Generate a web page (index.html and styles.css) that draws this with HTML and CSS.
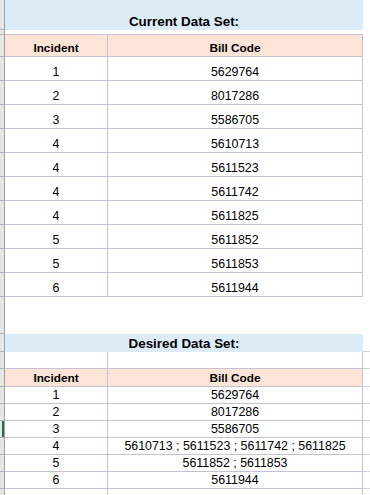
FILE: index.html
```html
<!DOCTYPE html>
<html>
<head>
<meta charset="utf-8">
<link rel="stylesheet" href="styles.css">
</head>
<body>
<div class="sheet">
  <div class="row h30"><div class="gut"></div><div class="title">Current Data Set:</div><div class="c3"></div></div>
  <div class="row h5"><div class="gut"></div><div class="gapcell"></div><div class="c3"></div></div>
  <div class="row h22 hdr"><div class="gut"></div><div class="cell c1">Incident</div><div class="cell c2">Bill Code</div><div class="c3"></div></div>
  <div class="row h24"><div class="gut"></div><div class="cell c1">1</div><div class="cell c2">5629764</div><div class="c3"></div></div>
  <div class="row h24"><div class="gut"></div><div class="cell c1">2</div><div class="cell c2">8017286</div><div class="c3"></div></div>
  <div class="row h24"><div class="gut"></div><div class="cell c1">3</div><div class="cell c2">5586705</div><div class="c3"></div></div>
  <div class="row h24"><div class="gut"></div><div class="cell c1">4</div><div class="cell c2">5610713</div><div class="c3"></div></div>
  <div class="row h24"><div class="gut"></div><div class="cell c1">4</div><div class="cell c2">5611523</div><div class="c3"></div></div>
  <div class="row h24"><div class="gut"></div><div class="cell c1">4</div><div class="cell c2">5611742</div><div class="c3"></div></div>
  <div class="row h24"><div class="gut"></div><div class="cell c1">4</div><div class="cell c2">5611825</div><div class="c3"></div></div>
  <div class="row h24"><div class="gut"></div><div class="cell c1">5</div><div class="cell c2">5611852</div><div class="c3"></div></div>
  <div class="row h24"><div class="gut"></div><div class="cell c1">5</div><div class="cell c2">5611853</div><div class="c3"></div></div>
  <div class="row h24"><div class="gut"></div><div class="cell c1">6</div><div class="cell c2">5611944</div><div class="c3"></div></div>
  <div class="row h37"><div class="gut"></div></div>
  <div class="row h18"><div class="gut"></div><div class="title">Desired Data Set:</div><div class="c3 grid"></div></div>
  <div class="row h17"><div class="gut"></div><div class="cell c1"></div><div class="cell c2"></div><div class="c3 grid"></div></div>
  <div class="row h18 hdr"><div class="gut"></div><div class="cell c1">Incident</div><div class="cell c2">Bill Code</div><div class="c3 grid"></div></div>
  <div class="row h17"><div class="gut"></div><div class="cell c1">1</div><div class="cell c2">5629764</div><div class="c3 grid"></div></div>
  <div class="row h17"><div class="gut"></div><div class="cell c1">2</div><div class="cell c2">8017286</div><div class="c3 grid"></div></div>
  <div class="row h17"><div class="gut sel"></div><div class="cell c1">3</div><div class="cell c2">5586705</div><div class="c3 grid"></div></div>
  <div class="row h17"><div class="gut"></div><div class="cell c1">4</div><div class="cell c2">5610713 ; 5611523 ; 5611742 ; 5611825</div><div class="c3 grid"></div></div>
  <div class="row h17"><div class="gut"></div><div class="cell c1">5</div><div class="cell c2">5611852 ; 5611853</div><div class="c3 grid"></div></div>
  <div class="row h17"><div class="gut"></div><div class="cell c1">6</div><div class="cell c2">5611944</div><div class="c3 grid"></div></div>
  <div class="row h17"><div class="gut"></div><div class="cell c1"></div><div class="cell c2"></div><div class="c3 grid"></div></div>
</div>
</body>
</html>
```
FILE: styles.css
```css
html, body {
  margin: 0;
  padding: 0;
  background: #ffffff;
}
body {
  width: 370px;
  height: 495px;
  overflow: hidden;
  font-family: "Liberation Sans", Arial, sans-serif;
  font-size: 12.4px;
  color: #000;
}
.sheet {
  display: flex;
  flex-direction: column;
}
.row {
  display: flex;
  flex: none;
}
.h30 { height: 30px; }
.h5 { height: 5px; }
.h22 { height: 22px; }
.h24 { height: 24px; }
.h37 { height: 37px; }
.h18 { height: 18px; }
.h17 { height: 17px; }

.gut {
  width: 5px;
  flex: none;
  box-sizing: border-box;
  background: #e6e6e6;
  border-right: 1px solid #a0a0a0;
  border-bottom: 1px solid #b4b4b4;
}
.gut.sel {
  box-shadow: inset -2px 0 0 #217346;
}
.title {
  width: 358px;
  flex: none;
  background: #ddebf7;
  font-weight: bold;
  font-size: 13.4px;
  line-height: 15px;
  display: flex;
  align-items: flex-end;
  justify-content: center;
  padding-bottom: 1px;
  box-sizing: border-box;
  white-space: nowrap;
}
.gapcell {
  width: 358px;
  flex: none;
  box-sizing: border-box;
  border-bottom: 1px solid #c6c1d9;
}
.cell {
  box-sizing: border-box;
  display: flex;
  align-items: flex-end;
  justify-content: center;
  line-height: 14px;
  padding-bottom: 1px;
  white-space: nowrap;
  flex: none;
  border-right: 1px solid #c6c1d9;
  border-bottom: 1px solid #c6c1d9;
}
.c1 { width: 103px; }
.c2 { width: 255px; }
.c3 {
  flex: 1;
  box-sizing: border-box;
}
.c3.grid {
  border-bottom: 1px solid #d4d4d4;
}
.hdr .cell {
  background: #fce4d6;
  font-weight: bold;
  font-size: 11.8px;
}
```
